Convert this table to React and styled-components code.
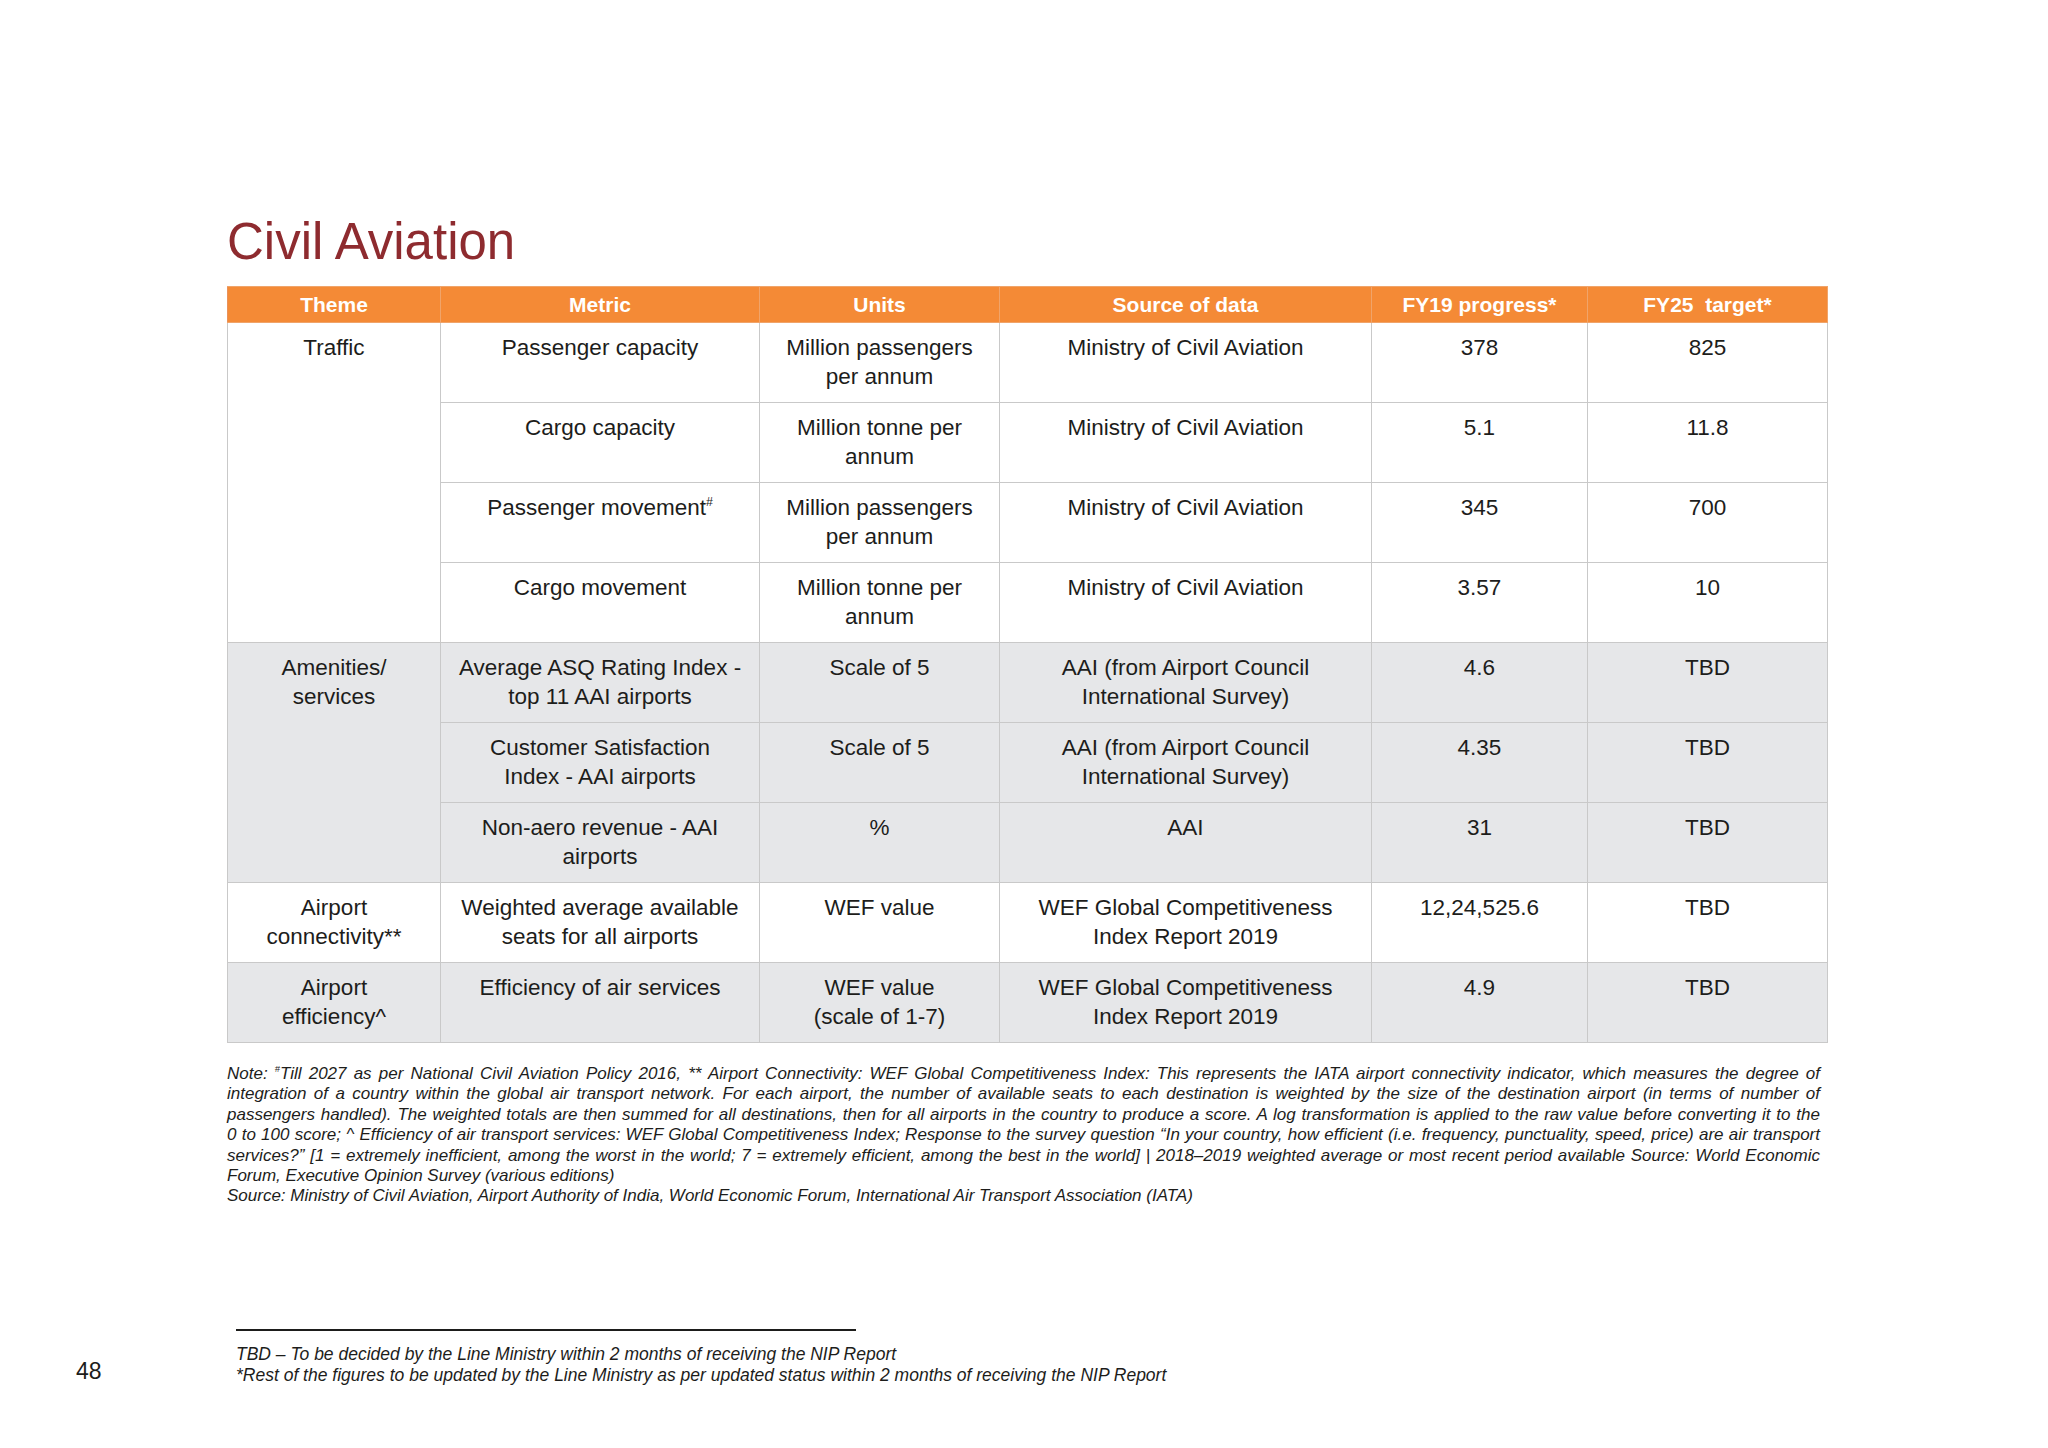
import React from 'react';
import styled, { createGlobalStyle } from 'styled-components';

const GlobalStyle = createGlobalStyle`
	html, body {
		margin: 0;
		padding: 0;
		background: #ffffff;
	}
	body {
		font-family: 'Liberation Sans', Arial, sans-serif;
		color: #1d1d1b;
	}
`;

// Table data: each cell is a list of lines, as they break in the report
const rows = [
	{ theme: ['Traffic'], span: 4, metric: ['Passenger capacity'], units: ['Million passengers', 'per annum'], source: ['Ministry of Civil Aviation'], fy19: '378', fy25: '825' },
	{ metric: ['Cargo capacity'], units: ['Million tonne per', 'annum'], source: ['Ministry of Civil Aviation'], fy19: '5.1', fy25: '11.8' },
	{ metric: ['Passenger movement#'], units: ['Million passengers', 'per annum'], source: ['Ministry of Civil Aviation'], fy19: '345', fy25: '700' },
	{ metric: ['Cargo movement'], units: ['Million tonne per', 'annum'], source: ['Ministry of Civil Aviation'], fy19: '3.57', fy25: '10' },
	{ theme: ['Amenities/', 'services'], span: 3, shade: true, metric: ['Average ASQ Rating Index -', 'top 11 AAI airports'], units: ['Scale of 5'], source: ['AAI (from Airport Council', 'International Survey)'], fy19: '4.6', fy25: 'TBD' },
	{ shade: true, metric: ['Customer Satisfaction', 'Index - AAI airports'], units: ['Scale of 5'], source: ['AAI (from Airport Council', 'International Survey)'], fy19: '4.35', fy25: 'TBD' },
	{ shade: true, metric: ['Non-aero revenue - AAI', 'airports'], units: ['%'], source: ['AAI'], fy19: '31', fy25: 'TBD' },
	{ theme: ['Airport', 'connectivity**'], span: 1, metric: ['Weighted average available', 'seats for all airports'], units: ['WEF value'], source: ['WEF Global Competitiveness', 'Index Report 2019'], fy19: '12,24,525.6', fy25: 'TBD' },
	{ theme: ['Airport', 'efficiency^'], span: 1, shade: true, metric: ['Efficiency of air services'], units: ['WEF value', '(scale of 1-7)'], source: ['WEF Global Competitiveness', 'Index Report 2019'], fy19: '4.9', fy25: 'TBD' },
];

const noteLines = [
	'Note: #Till 2027 as per National Civil Aviation Policy 2016, ** Airport Connectivity: WEF Global Competitiveness Index: This represents the IATA airport connectivity indicator, which measures the degree of',
	'integration of a country within the global air transport network. For each airport, the number of available seats to each destination is weighted by the size of the destination airport (in terms of number of',
	'passengers handled). The weighted totals are then summed for all destinations, then for all airports in the country to produce a score. A log transformation is applied to the raw value before converting it to the',
	'0 to 100 score; ^ Efficiency of air transport services: WEF Global Competitiveness Index; Response to the survey question \u201cIn your country, how efficient (i.e. frequency, punctuality, speed, price) are air transport',
	'services?\u201d [1 = extremely inefficient, among the worst in the world; 7 = extremely efficient, among the best in the world] | 2018\u20132019 weighted average or most recent period available Source: World Economic',
];

const columns = [
	{ label: 'Theme', w: 213 },
	{ label: 'Metric', w: 319 },
	{ label: 'Units', w: 240 },
	{ label: 'Source of data', w: 372 },
	{ label: 'FY19 progress*', w: 216 },
	{ label: 'FY25\u00a0 target*', w: 240 },
];

const Page = styled.div`
	width: 2048px;
	min-height: 1448px;
	box-sizing: border-box;
	padding-top: 212px;
	display: flex;
	flex-direction: column;
`;

const Main = styled.main`
	padding-left: 227px;
	width: 1600px;
`;

const Title = styled.h1`
	margin: 0 0 14px;
	font-size: 51px;
	line-height: 60px;
	font-weight: 400;
	color: #8e2b2f;
`;

const Table = styled.table`
	width: 1600px;
	border-collapse: collapse;
	table-layout: fixed;
`;

const Col = styled.col`
	width: ${props => props.$w}px;
`;

const HeadCell = styled.th`
	height: 35px;
	padding: 0 4px;
	background: #f48a36;
	border: 1px solid #f0a46a;
	border-left-color: #e9915a;
	color: #ffffff;
	font-size: 21px;
	font-weight: 700;
	text-align: center;
	vertical-align: middle;
	white-space: pre;
`;

const Row = styled.tr`
	height: 80px;
`;

const Cell = styled.td`
	padding: 10px 6px 0;
	background: ${props => (props.$shade ? '#e6e7e9' : '#ffffff')};
	border: 1px solid #c9c9c9;
	font-size: 22.5px;
	line-height: 29px;
	text-align: center;
	vertical-align: top;
	white-space: nowrap;
`;

const Line = styled.span`
	display: block;
`;

const Sup = styled.sup`
	font-size: 0.55em;
	line-height: 0;
	vertical-align: 0.75em;
`;

const Notes = styled.div`
	margin-top: 21px;
	width: 1593px;
	font-size: 17px;
	line-height: 20.4px;
	font-style: italic;
`;

const NoteLine = styled.div`
	white-space: nowrap;
	text-align: ${props => (props.$full ? 'justify' : 'left')};
	text-align-last: ${props => (props.$full ? 'justify' : 'left')};
`;

const Footer = styled.footer`
	margin-top: 122px;
	display: flex;
	align-items: flex-end;
	padding-left: 76px;
`;

const PageNumber = styled.div`
	width: 160px;
	font-size: 23px;
	line-height: 26px;
	padding-bottom: 2px;
`;

const Footnotes = styled.div`
	display: flex;
	flex-direction: column;
`;

const Rule = styled.div`
	width: 620px;
	height: 2px;
	background: #1d1d1b;
	margin-bottom: 13px;
`;

const Footnote = styled.div`
	font-size: 17.5px;
	line-height: 21px;
	font-style: italic;
	white-space: nowrap;
`;

const renderLines = lines =>
	lines.map(text => {
		if (text.endsWith('#')) {
			return (
				<Line key={text}>
					{text.slice(0, -1)}
					<Sup>#</Sup>
				</Line>
			);
		}
		return <Line key={text}>{text}</Line>;
	});

const App = () => {
	return (
		<Page>
			<GlobalStyle />
			<Main>
				<Title>Civil Aviation</Title>

				<Table>
					<colgroup>
						{columns.map(col => (
							<Col key={col.label} $w={col.w} />
						))}
					</colgroup>
					<thead>
						<tr>
							{columns.map(col => (
								<HeadCell key={col.label}>{col.label}</HeadCell>
							))}
						</tr>
					</thead>
					<tbody>
						{rows.map((row, i) => (
							<Row key={i}>
								{row.theme && (
									<Cell rowSpan={row.span} $shade={row.shade}>
										{renderLines(row.theme)}
									</Cell>
								)}
								<Cell $shade={row.shade}>{renderLines(row.metric)}</Cell>
								<Cell $shade={row.shade}>{renderLines(row.units)}</Cell>
								<Cell $shade={row.shade}>{renderLines(row.source)}</Cell>
								<Cell $shade={row.shade}>{row.fy19}</Cell>
								<Cell $shade={row.shade}>{row.fy25}</Cell>
							</Row>
						))}
					</tbody>
				</Table>

				<Notes>
					{noteLines.map((text, i) => (
						<NoteLine key={i} $full>
							{i === 0 ? (
								<>
									Note: <Sup>#</Sup>
									{text.slice(7)}
								</>
							) : (
								text
							)}
						</NoteLine>
					))}
					<NoteLine>Forum, Executive Opinion Survey (various editions)</NoteLine>
					<NoteLine>
						Source: Ministry of Civil Aviation, Airport Authority of India, World Economic Forum, International Air
						Transport Association (IATA)
					</NoteLine>
				</Notes>
			</Main>

			<Footer>
				<PageNumber>48</PageNumber>
				<Footnotes>
					<Rule />
					<Footnote>TBD – To be decided by the Line Ministry within 2 months of receiving the NIP Report</Footnote>
					<Footnote>
						*Rest of the figures to be updated by the Line Ministry as per updated status within 2 months of receiving the
						NIP Report
					</Footnote>
				</Footnotes>
			</Footer>
		</Page>
	);
};

export default App;
